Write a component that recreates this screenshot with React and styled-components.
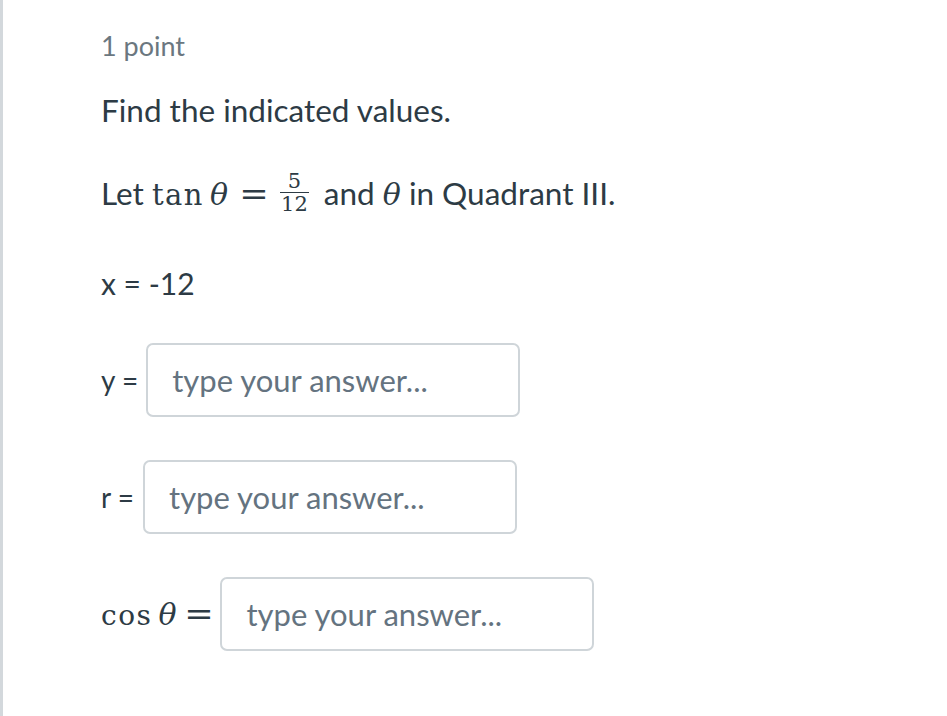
import React from 'react';
import styled, { createGlobalStyle } from 'styled-components';

const GlobalStyle = createGlobalStyle`
  html, body {
    margin: 0;
    padding: 0;
    background: #ffffff;
  }
  body {
    font-family: Lato, "Open Sans", sans-serif;
    color: #2d3b45;
  }
`;

const Page = styled.div`
  box-sizing: border-box;
  min-height: 716px;
  border-left: 3px solid #d3d8dc;
  padding: 29px 0 0 98px;
`;

const Points = styled.div`
  font-size: 27px;
  line-height: 34px;
  color: #6b7780;
  margin-bottom: 27px;
`;

const Text = styled.p`
  margin: 0;
  font-size: 31.5px;
  line-height: 40px;
  margin-bottom: ${(p) => p.gap || 0}px;
`;

const Math = styled.span`
  font-family: "DejaVu Serif", "Liberation Serif", serif;
  white-space: nowrap;
`;

const Fn = styled.span`
  font-size: ${(p) => p.size || 28}px;
  letter-spacing: 1.5px;
  margin-right: 6px;
`;

const MathVar = styled.i`
  font-family: "DejaVu Serif", serif;
  font-style: italic;
  font-size: 30px;
`;

const Eq = styled.span`
  display: inline-block;
  width: 30px;
  text-align: center;
  font-family: "DejaVu Serif", serif;
  font-size: 32px;
  transform: scaleX(1.1);
  margin: 0 ${(p) => p.space || 11}px 0 ${(p) => p.lead || p.space || 11}px;
`;

const Frac = styled.span`
  display: inline-flex;
  flex-direction: column;
  align-items: center;
  vertical-align: 17px;
  font-family: "DejaVu Serif", serif;
  font-size: 21px;
  line-height: 22px;
  margin-right: 15px;
`;

const Num = styled.span`
  align-self: stretch;
  text-align: center;
  border-bottom: 1.5px solid #2d3b45;
`;

const Den = styled.span`
  padding: 0 1px;
`;

const Given = styled.div`
  font-size: 30px;
  line-height: 36px;
  margin-bottom: 42px;
`;

const Row = styled.div`
  display: flex;
  align-items: center;
  margin-bottom: 43px;
`;

const Label = styled.span`
  font-size: 28px;
  margin-right: ${(p) => p.gap ?? 8}px;
  white-space: nowrap;
`;

const Answer = styled.input`
  box-sizing: border-box;
  width: 374px;
  height: 74px;
  border: 2px solid #cfd5d9;
  border-radius: 7px;
  padding: 0 0 0 24px;
  font-family: Lato, sans-serif;
  font-size: 31px;
  color: #2d3b45;
  outline: none;
  &::placeholder {
    color: #647380;
  }
`;

const theta = '\u03b8';

export default function App() {
  return (
    <>
      <GlobalStyle />
      <Page>
        <Points>1 point</Points>
        <Text gap={40}>Find the indicated values.</Text>
        <Text gap={50}>
          Let{' '}
          <Math>
            <Fn size={29}>tan</Fn>
            <MathVar>{theta}</MathVar>
            <Eq>=</Eq>
          </Math>
          <Frac>
            <Num>5</Num>
            <Den>12</Den>
          </Frac>
          and <MathVar>{theta}</MathVar> in Quadrant III.
        </Text>
        <Given>x = -12</Given>
        <Row>
          <Label>y =</Label>
          <Answer placeholder="type your answer..." />
        </Row>
        <Row>
          <Label gap={9}>r =</Label>
          <Answer placeholder="type your answer..." />
        </Row>
        <Row>
          <Label gap={2}>
            <Math>
              <Fn>cos</Fn>
              <MathVar>{theta}</MathVar>
              <Eq lead={8} space={4}>=</Eq>
            </Math>
          </Label>
          <Answer placeholder="type your answer..." />
        </Row>
      </Page>
    </>
  );
}
